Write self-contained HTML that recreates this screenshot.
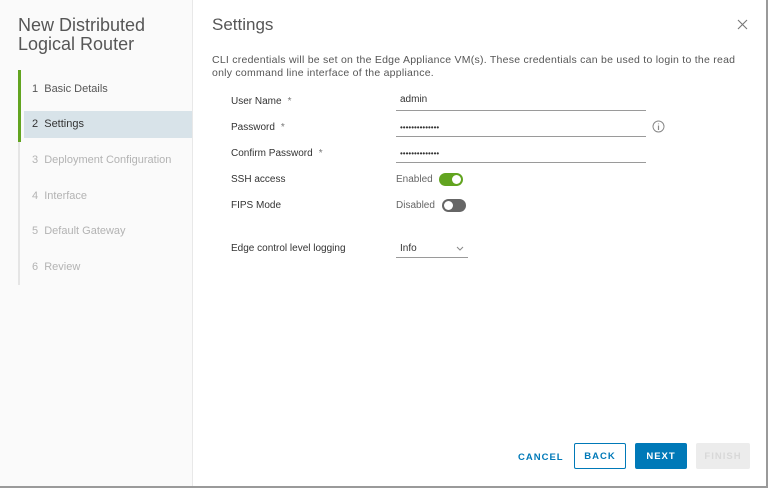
<html><head><style>
body{margin:0;width:768px;height:488px;overflow:hidden;background:#fff;font-family:"Liberation Sans",sans-serif;position:relative}
.a{position:absolute}
.left{left:0;top:0;width:192px;height:488px;background:#fafafa;border-right:1px solid #e8e8e8}
.step{position:absolute;left:32px;font-size:11px;color:#565656}
.dis{color:#b3b3b3}
.lbl{position:absolute;left:231px;font-size:10px;color:#333}
.lbl i{color:#777;font-style:normal;margin-left:6px}
.inp{position:absolute;left:396px;width:246px;border-bottom:1px solid #9a9a9a;font-size:10px;color:#333;padding-left:4px;height:16px}
</style></head><body>
<div class="a left"></div>
<div class="a" style="left:18px;top:16px;font-size:18px;line-height:19px;color:#565656">New Distributed<br>Logical Router</div>
<div class="a" style="left:18px;top:70px;width:2px;height:215px;background:#e5e5e5"></div>
<div class="a" style="left:18px;top:70px;width:3px;height:72px;background:#62a420"></div>
<div class="a" style="left:24px;top:111px;width:168px;height:27px;background:#d8e3e9"></div>
<div class="step" style="top:83px">1&nbsp;&nbsp;Basic Details</div>
<div class="step" style="top:118px;color:#333">2&nbsp;&nbsp;Settings</div>
<div class="step dis" style="top:154px">3&nbsp;&nbsp;Deployment Configuration</div>
<div class="step dis" style="top:190px">4&nbsp;&nbsp;Interface</div>
<div class="step dis" style="top:225px">5&nbsp;&nbsp;Default Gateway</div>
<div class="step dis" style="top:261px">6&nbsp;&nbsp;Review</div>
<div class="a" style="left:212px;top:15px;font-size:17px;color:#565656">Settings</div>
<svg class="a" style="left:737px;top:19px" width="11" height="11"><path d="M1 1L10 10M10 1L1 10" stroke="#777" stroke-width="1.1"/></svg>
<div class="a" style="left:212px;top:54px;width:540px;font-size:10.5px;letter-spacing:0.25px;line-height:13px;color:#565656;white-space:nowrap">CLI credentials will be set on the Edge Appliance VM(s). These credentials can be used to login to the read<br>only command line interface of the appliance.</div>
<div class="lbl" style="top:96px">User Name<i>*</i></div>
<div class="lbl" style="top:122px">Password<i>*</i></div>
<div class="lbl" style="top:148px">Confirm Password<i>*</i></div>
<div class="lbl" style="top:174px">SSH access</div>
<div class="lbl" style="top:200px">FIPS Mode</div>
<div class="lbl" style="top:243px">Edge control level logging</div>
<div class="inp" style="top:94px">admin</div>
<div class="inp" style="top:120px;font-size:8px;line-height:16px">••••••••••••••</div>
<div class="inp" style="top:146px;font-size:8px;line-height:16px">••••••••••••••</div>
<svg class="a" style="left:652px;top:120px" width="13" height="13"><circle cx="6.5" cy="6.5" r="5.5" fill="none" stroke="#888"/><path d="M6.5 5.5V10M6.5 3.5V4.3" stroke="#888" stroke-width="1.2"/></svg>
<div class="a" style="left:396px;top:174px;font-size:10px;color:#666">Enabled</div>
<div class="a" style="left:439px;top:173px;width:24px;height:13px;border-radius:7px;background:#62a420"><div class="a" style="right:2px;top:2px;width:9px;height:9px;border-radius:5px;background:#fff"></div></div>
<div class="a" style="left:396px;top:200px;font-size:10px;color:#666">Disabled</div>
<div class="a" style="left:442px;top:199px;width:24px;height:13px;border-radius:7px;background:#666"><div class="a" style="left:2px;top:2px;width:9px;height:9px;border-radius:5px;background:#fff"></div></div>
<div class="a" style="left:396px;top:243px;width:68px;height:14px;border-bottom:1px solid #9a9a9a;font-size:10px;color:#333;padding-left:4px">Info<svg class="a" style="left:60px;top:3px" width="8" height="6"><path d="M1 1L4 4L7 1" fill="none" stroke="#888"/></svg></div>
<div class="a" style="left:518px;top:452px;font-size:9.5px;font-weight:bold;letter-spacing:1px;color:#0079b8">CANCEL</div>
<div class="a" style="left:574px;top:443px;width:50px;height:24px;border:1px solid #0079b8;border-radius:2px;font-size:9.5px;font-weight:bold;letter-spacing:1px;color:#0079b8;text-align:center;line-height:26px">BACK</div>
<div class="a" style="left:635px;top:443px;width:52px;height:26px;background:#0079b8;border-radius:2px;font-size:9.5px;font-weight:bold;letter-spacing:1px;color:#fff;text-align:center;line-height:28px">NEXT</div>
<div class="a" style="left:696px;top:443px;width:54px;height:26px;background:#ececec;border-radius:2px;font-size:9.5px;font-weight:bold;letter-spacing:1px;color:#d8d8d8;text-align:center;line-height:28px">FINISH</div>
<div class="a" style="left:766px;top:0;width:2px;height:488px;background:#9a9a9a"></div>
<div class="a" style="left:0;top:486px;width:768px;height:2px;background:#9a9a9a"></div>
</body></html>
